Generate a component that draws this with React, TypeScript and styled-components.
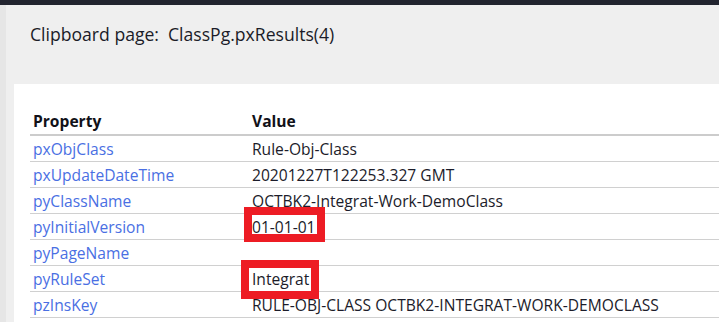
import styled, { createGlobalStyle } from 'styled-components';

const rows: { name: string; value: string }[] = [
  { name: 'pxObjClass', value: 'Rule-Obj-Class' },
  { name: 'pxUpdateDateTime', value: '20201227T122253.327 GMT' },
  { name: 'pyClassName', value: 'OCTBK2-Integrat-Work-DemoClass' },
  { name: 'pyInitialVersion', value: '01-01-01' },
  { name: 'pyPageName', value: '' },
  { name: 'pyRuleSet', value: 'Integrat' },
  { name: 'pzInsKey', value: 'RULE-OBJ-CLASS OCTBK2-INTEGRAT-WORK-DEMOCLASS' },
];

const highlights = [
  { left: 244, top: 207, width: 81, height: 35 },
  { left: 241, top: 260, width: 78, height: 39 },
];

function App() {
  return (
    <>
      <GlobalStyle />
      <Page>
        <TopBar />
        <Body>
          <SideStrip />
          <Main>
            <PageHeader>
              <span>Clipboard page:</span>
              <span>ClassPg.pxResults(4)</span>
            </PageHeader>
            <Panel>
              <Table>
                <thead>
                  <tr>
                    <HeadCell $width={213}>Property</HeadCell>
                    <HeadCell>Value</HeadCell>
                  </tr>
                </thead>
                <tbody>
                  {rows.map((row) => (
                    <tr key={row.name}>
                      <Cell>
                        <PropLink href="#">{row.name}</PropLink>
                      </Cell>
                      <Cell>{row.value}</Cell>
                    </tr>
                  ))}
                </tbody>
              </Table>
            </Panel>
          </Main>
        </Body>
        {highlights.map((h, i) => (
          <Highlight
            key={i}
            style={{ left: h.left, top: h.top, width: h.width, height: h.height }}
          />
        ))}
      </Page>
    </>
  );
}

export default App;

const GlobalStyle = createGlobalStyle`
  html, body {
    margin: 0;
    padding: 0;
    background: #efefef;
    overflow: hidden;
  }
  body {
    font-family: "Open Sans", "Noto Sans", sans-serif;
  }
`;

const Page = styled.div`
  position: relative;
  width: 719px;
  height: 322px;
  overflow: hidden;
  display: flex;
  flex-direction: column;
`;

const TopBar = styled.div`
  height: 5px;
  flex-shrink: 0;
  background: #22242f;
`;

const Body = styled.div`
  flex: 1;
  display: flex;
`;

const SideStrip = styled.div`
  width: 6px;
  flex-shrink: 0;
  background: #e6e6e6;
`;

const Main = styled.div`
  flex: 1;
  display: flex;
  flex-direction: column;
  padding-left: 8px;
  background: #efefef;
`;

const PageHeader = styled.div`
  height: 79px;
  display: flex;
  gap: 9px;
  padding: 17px 0 0 16px;
  box-sizing: border-box;
  font-size: 17.6px;
  color: #1b1c28;
`;

const Panel = styled.div`
  flex: 1;
  background: #ffffff;
  padding: 23px 0 0 16px;
  margin-right: -40px;
`;

const Table = styled.table`
  width: 100%;
  border-collapse: collapse;
  font-size: 15.6px;
  color: #1c1c2a;
`;

const HeadCell = styled.th<{ $width?: number }>`
  width: ${(p) => (p.$width ? `${p.$width}px` : 'auto')};
  height: 27px;
  padding: 0 3px;
  text-align: left;
  font-weight: 700;
  font-size: 15.6px;
  color: #111118;
  border-bottom: 2px solid #cccccc;
  vertical-align: middle;
`;

const Cell = styled.td`
  height: 25px;
  padding: 0 3px;
  border-bottom: 1px solid #d0d0d0;
  white-space: nowrap;
  vertical-align: middle;
`;

const PropLink = styled.a`
  color: #4a6fe3;
  text-decoration: none;
`;

const Highlight = styled.div`
  position: absolute;
  box-sizing: border-box;
  border: 8px solid #ed1c24;
  pointer-events: none;
`;
